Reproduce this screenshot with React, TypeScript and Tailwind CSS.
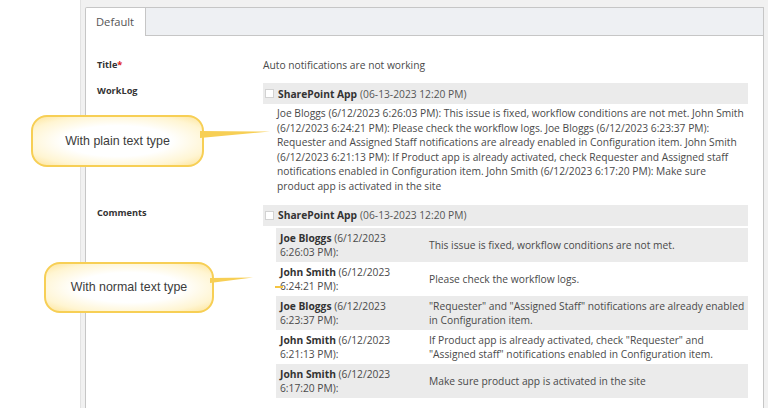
import React from "react";

const plainLines = [
  "Joe Bloggs (6/12/2023 6:26:03 PM): This issue is fixed, workflow conditions are not met. John Smith",
  "(6/12/2023 6:24:21 PM): Please check the workflow logs. Joe Bloggs (6/12/2023 6:23:37 PM):",
  "Requester and Assigned Staff notifications are already enabled in Configuration item. John Smith",
  "(6/12/2023 6:21:13 PM): If Product app is already activated, check Requester and Assigned staff",
  "notifications enabled in Configuration item. John Smith (6/12/2023 6:17:20 PM): Make sure",
  "product app is activated in the site",
];

const comments = [
  { name: "Joe Bloggs", date: "(6/12/2023", time: "6:26:03 PM):", text: ["This issue is fixed, workflow conditions are not met."] },
  { name: "John Smith", date: "(6/12/2023", time: "6:24:21 PM):", text: ["Please check the workflow logs."] },
  { name: "Joe Bloggs", date: "(6/12/2023", time: "6:23:37 PM):", text: ["\"Requester\" and \"Assigned Staff\" notifications are already enabled", "in Configuration item."] },
  { name: "John Smith", date: "(6/12/2023", time: "6:21:13 PM):", text: ["If Product app is already activated, check \"Requester\" and", "\"Assigned staff\" notifications enabled in Configuration item."] },
  { name: "John Smith", date: "(6/12/2023", time: "6:17:20 PM):", text: ["Make sure product app is activated in the site"] },
];

function Header() {
  return (
    <div className="flex h-[21px] w-[485px] items-center bg-[#ebebeb] pl-[2px]">
      <span className="mr-[4px] h-[9px] w-[9px] border border-[#d2d2d2] bg-white" />
      <span className="font-bold text-[#333]">SharePoint App</span>
      <span className="ml-[3px] text-[#555]">(06-13-2023 12:20 PM)</span>
    </div>
  );
}

function Callout({ text, className }: { text: string; className: string }) {
  return (
    <div
      className={
        "absolute flex items-center justify-center rounded-[16px] border-2 border-[#f7cf55] bg-[radial-gradient(ellipse_at_center,#ffffff_45%,#fff5d2_78%,#fde49a_100%)] font-['Liberation_Sans',Arial,sans-serif] text-[12.4px] text-[#3c3c3c] " +
        className
      }
    >
      {text}
    </div>
  );
}

export default function App() {
  return (
    <div className="relative h-[408px] w-[768px] overflow-hidden bg-white font-['Open_Sans',sans-serif] text-[10.25px] text-[#4a4a4a]">
      <div className="ml-[80px] flex h-full flex-col border-l border-[#e2e2e2] bg-[#f1f1f1] pl-[4px] pr-[4px] pt-[7px]">
        <div className="flex h-[29px] shrink-0">
          <div className="flex w-[61px] items-center rounded-tl-[2px] border border-b-0 border-[#c6c6c6] bg-white pl-[10px] text-[11.2px] text-[#555]">
            Default
          </div>
          <div className="flex-1 border border-l-0 border-[#c6c6c6] bg-[#eef0f3]" />
        </div>
        <div className="flex-1 border-l border-r border-[#c6c6c6] bg-white">
          <div className="grid grid-cols-[177px_1fr] leading-[14px]">
            <div className="mt-[21px] pl-[11px] pt-[1px] text-[9.2px] font-bold text-[#333]">
              Title<span className="text-[#e02020]">*</span>
            </div>
            <div className="mt-[21px] pt-[1px]">Auto notifications are not working</div>

            <div className="mt-[11px] pl-[11px] pt-[1px] text-[9.2px] font-bold text-[#333]">WorkLog</div>
            <div className="mt-[11px]">
              <Header />
              <div className="whitespace-nowrap pl-[14px] pt-[2px] leading-[14.6px]">
                {plainLines.map((l, i) => (
                  <div key={i}>{l}</div>
                ))}
              </div>
            </div>

            <div className="mt-[11px] pl-[11px] pt-[1px] text-[9.2px] font-bold text-[#333]">Comments</div>
            <div className="mt-[11px]">
              <Header />
              <div className="mt-[2px] pl-[13px]">
                {comments.map((c, i) => (
                  <div
                    key={i}
                    className={
                      "flex h-[34px] w-[472px] items-center " + (i % 2 === 0 ? "bg-[#ebebeb]" : "bg-white")
                    }
                  >
                    <div className="w-[153px] shrink-0 pl-[4px]">
                      <div>
                        <span className="font-bold text-[#333]">{c.name}</span> {c.date}
                      </div>
                      <div>{c.time}</div>
                    </div>
                    <div className="whitespace-nowrap">
                      {c.text.map((t, j) => (
                        <div key={j}>{t}</div>
                      ))}
                    </div>
                  </div>
                ))}
              </div>
            </div>
          </div>
        </div>
      </div>

      <Callout text="With plain text type" className="left-[31px] top-[115px] h-[52px] w-[173px]" />
      <svg className="absolute left-[200px] top-[125px]" width="72" height="16" viewBox="0 0 72 16">
        <polygon points="0,6 70,6.5 0,13" fill="#f7cf55" />
      </svg>

      <Callout text="With normal text type" className="left-[44px] top-[262px] h-[51px] w-[170px]" />
      <svg className="absolute left-[210px] top-[272px]" width="46" height="14" viewBox="0 0 46 14">
        <polygon points="0,6 43,5.5 0,11" fill="#f7cf55" />
      </svg>
      <div className="absolute left-[275px] top-[286px] h-[2px] w-[8px] bg-[#f5c542]" />
    </div>
  );
}
